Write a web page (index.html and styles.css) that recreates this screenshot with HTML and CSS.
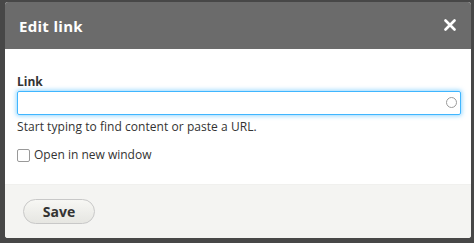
FILE: index.html
```html
<!DOCTYPE html>
<html>
<head>
<meta charset="utf-8">
<link rel="stylesheet" href="styles.css">
</head>
<body>
<div class="dialog">
  <div class="titlebar">
    <span class="title">Edit link</span>
    <span class="close"><svg width="12" height="12" viewBox="0 0 12 12"><path d="M1.5 1.5 L10.5 10.5 M10.5 1.5 L1.5 10.5" stroke="#fff" stroke-width="2.6" stroke-linecap="round"/></svg></span>
  </div>
  <div class="content">
    <label class="label">Link</label>
    <div class="input">
      <span class="throbber"></span>
    </div>
    <div class="help">Start typing to find content or paste a URL.</div>
    <div class="check"><span class="box"></span><span>Open in new window</span></div>
  </div>
  <div class="footer">
    <button class="save">Save</button>
  </div>
</div>
</body>
</html>
```
FILE: styles.css
```css
html, body { margin: 0; padding: 0; }
body {
  background: #474747;
  width: 474px;
  height: 243px;
  overflow: hidden;
  font-family: "Open Sans", "DejaVu Sans", sans-serif;
  box-sizing: border-box;
  padding: 2px 3px 0 5px;
}
.dialog {
  width: 466px;
  height: 236px;
  border-radius: 3px;
  overflow: hidden;
  display: flex;
  flex-direction: column;
  background: #fff;
}
.titlebar {
  height: 47px;
  background: #6b6b6b;
  display: flex;
  align-items: center;
  justify-content: space-between;
  padding: 0 15px 0 14px;
  flex: none;
}
.title {
  color: #fff;
  font-weight: bold;
  font-size: 15px;
  letter-spacing: 0.3px;
}
.close { display: flex; margin-top: -1px; }
.content {
  flex: 1;
  padding: 25px 10px 0 12px;
  background: #fff;
}
.label {
  display: block;
  font-weight: bold;
  font-size: 12px;
  color: #333;
  line-height: 16px;
}
.input {
  margin-top: 1px;
  height: 24px;
  width: 444px;
  box-sizing: border-box;
  border: 1px solid #40b6ff;
  border-radius: 2px;
  box-shadow: 0 0 4px 1px rgba(64,182,255,0.55);
  position: relative;
}
.throbber {
  position: absolute;
  right: 3px;
  top: 5px;
  width: 9px;
  height: 9px;
  border: 1.5px solid #9a9a9a;
  border-radius: 50%;
}
.help {
  margin-top: 4px;
  font-size: 12px;
  color: #333;
  line-height: 16px;
  letter-spacing: 0.05px;
}
.check {
  margin-top: 12px;
  display: flex;
  align-items: center;
  font-size: 12px;
  color: #333;
  line-height: 16px;
}
.box {
  width: 11px;
  height: 11px;
  border: 1px solid #999;
  border-radius: 2px;
  margin-right: 4px;
  background: #fff;
}
.footer {
  height: 53px;
  flex: none;
  background: #f4f4f2;
  border-top: 1px solid #f0f0ee;
  display: flex;
  align-items: center;
  padding-left: 18px;
}
.save {
  width: 72px;
  height: 25px;
  border: 1px solid #c8c8c8;
  border-radius: 13px;
  background: linear-gradient(#f7f7f4, #e6e6e2);
  font-family: "Open Sans", "DejaVu Sans", sans-serif;
  font-weight: bold;
  font-size: 14px;
  color: #333;
  padding: 0;
  margin-top: -1px;
}
```
